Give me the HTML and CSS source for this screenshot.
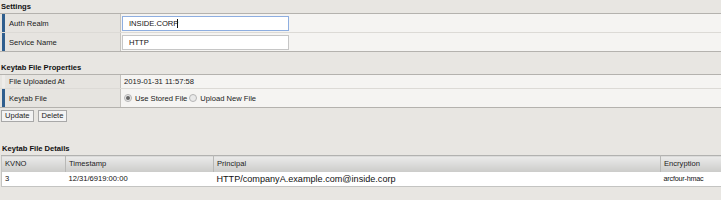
FILE: index.html
```html
<!DOCTYPE html>
<html lang="en">
<head>
  <meta charset="UTF-8" />
  <title>Keytab Settings</title>
  <link rel="stylesheet" href="styles.css">
</head>
<body>
  <div class="section-title">Settings</div>
  <div class="form">
    <div class="form-row">
      <div class="form-label required">Auth Realm</div>
      <div class="form-value"><input type="text" class="text-input focused" value="INSIDE.CORP" /><span class="caret"></span></div>
    </div>
    <div class="form-row">
      <div class="form-label required">Service Name</div>
      <div class="form-value"><input type="text" class="text-input" value="HTTP" /></div>
    </div>
  </div>

  <div class="section-title spaced">Keytab File Properties</div>
  <div class="form">
    <div class="form-row short">
      <div class="form-label">File Uploaded At</div>
      <div class="form-value text">2019-01-31 11:57:58</div>
    </div>
    <div class="form-row">
      <div class="form-label required">Keytab File</div>
      <div class="form-value text">
        <label class="radio"><span class="radio-dot checked"></span>Use Stored File</label>
        <label class="radio"><span class="radio-dot"></span>Upload New File</label>
      </div>
    </div>
  </div>

  <div class="actions">
    <button class="btn">Update</button>
    <button class="btn">Delete</button>
  </div>

  <div class="section-title details">Keytab File Details</div>
  <table class="grid">
    <thead>
      <tr>
        <th class="col-kvno">KVNO</th>
        <th class="col-time">Timestamp</th>
        <th class="col-principal">Principal</th>
        <th class="col-enc">Encryption</th>
      </tr>
    </thead>
    <tbody>
      <tr>
        <td>3</td>
        <td>12/31/6919:00:00</td>
        <td class="principal">HTTP/companyA.example.com@inside.corp</td>
        <td class="enc">arcfour-hmac</td>
      </tr>
    </tbody>
  </table>
</body>
</html>
```

FILE: styles.css
```css
/* Base */
* {
  box-sizing: border-box;
  margin: 0;
  padding: 0;
}

body {
  font-family: 'Liberation Sans', Arial, sans-serif;
  font-size: 7.6px;
  color: #1a1a1a;
  background-color: #e8e6e2;
  width: 721px;
  height: 200px;
  overflow: hidden;
}

/* Section titles */
.section-title {
  height: 13px;
  line-height: 14px;
  padding-left: 1px;
  font-weight: bold;
  color: #111;
}

.section-title.spaced {
  margin-top: 9px;
}

.section-title.details {
  margin-top: 20px;
  padding-left: 2px;
}

/* Forms */
.form {
  border-top: 1px solid #b4b2ae;
  border-bottom: 1px solid #b4b2ae;
}

.form-row {
  display: grid;
  grid-template-columns: 121px 1fr;
  min-height: 19px;
  border-bottom: 1px solid #dcdad6;
  background: linear-gradient(to right, #e6e4e0 120px, #f5f4f2 120px);
}

.form-row:last-child {
  border-bottom: none;
  min-height: 18px;
}

.form-row.short {
  min-height: 14px;
}

.form-label {
  display: flex;
  align-items: center;
  margin-left: 2px;
  padding-left: 4px;
  border-left: 3px solid #eeece9;
  border-right: 1px solid #c4c2be;
}

.form-label.required {
  border-left-color: #2f5e8e;
}

.form-value {
  display: flex;
  align-items: center;
  padding-left: 1px;
  position: relative;
}

.form-value.text {
  padding-left: 3px;
}

.text-input {
  width: 167px;
  height: 15px;
  border: 1px solid #c6c6c6;
  background: #fff;
  padding: 0 6px;
  font-family: inherit;
  font-size: 7.6px;
  color: #111;
  outline: none;
}

.text-input.focused {
  border-color: #8eaee0;
}

.caret {
  position: absolute;
  left: 56px;
  top: 5px;
  width: 1px;
  height: 9px;
  background: #111;
}

/* Radios */
.radio {
  display: inline-flex;
  align-items: center;
  margin-right: 2px;
}

.radio-dot {
  width: 8px;
  height: 8px;
  border-radius: 50%;
  border: 1px solid #b5b5b5;
  background: #e9e9e9;
  margin-right: 3px;
  position: relative;
}

.radio-dot.checked::after {
  content: '';
  position: absolute;
  left: 1px;
  top: 1px;
  width: 4px;
  height: 4px;
  border-radius: 50%;
  background: #666;
}

/* Buttons */
.actions {
  display: flex;
  gap: 4px;
  padding: 2px 1px 0;
}

.btn {
  height: 12px;
  padding: 0 3px;
  border: 1px solid #a8a8a8;
  background: #f3f3f3;
  font-family: inherit;
  font-size: 7.6px;
  color: #222;
  line-height: 10px;
}

/* Data grid */
.grid {
  margin-left: 1px;
  width: 720px;
  border-collapse: collapse;
  border-top: 1px solid #b2b2b0;
  border-left: 1px solid #c4c4c2;
  border-bottom: 1px solid #c4c4c2;
}

.grid th {
  height: 16px;
  text-align: left;
  font-weight: normal;
  padding-left: 3px;
  color: #222;
  background: linear-gradient(#ebebea, #cbcbc9);
  border-right: 1px solid #b8b8b6;
}

.grid th:last-child {
  border-right: none;
}

.grid td {
  height: 15px;
  padding-left: 3px;
  background: #fff;
  color: #111;
}

.col-kvno { width: 64px; }
.col-time { width: 148px; }
.col-principal { width: 447px; }

.grid td.principal {
  font-size: 9.1px;
  padding-left: 3px;
}

.grid td.enc {
  font-size: 7.2px;
  letter-spacing: -0.2px;
}
```
